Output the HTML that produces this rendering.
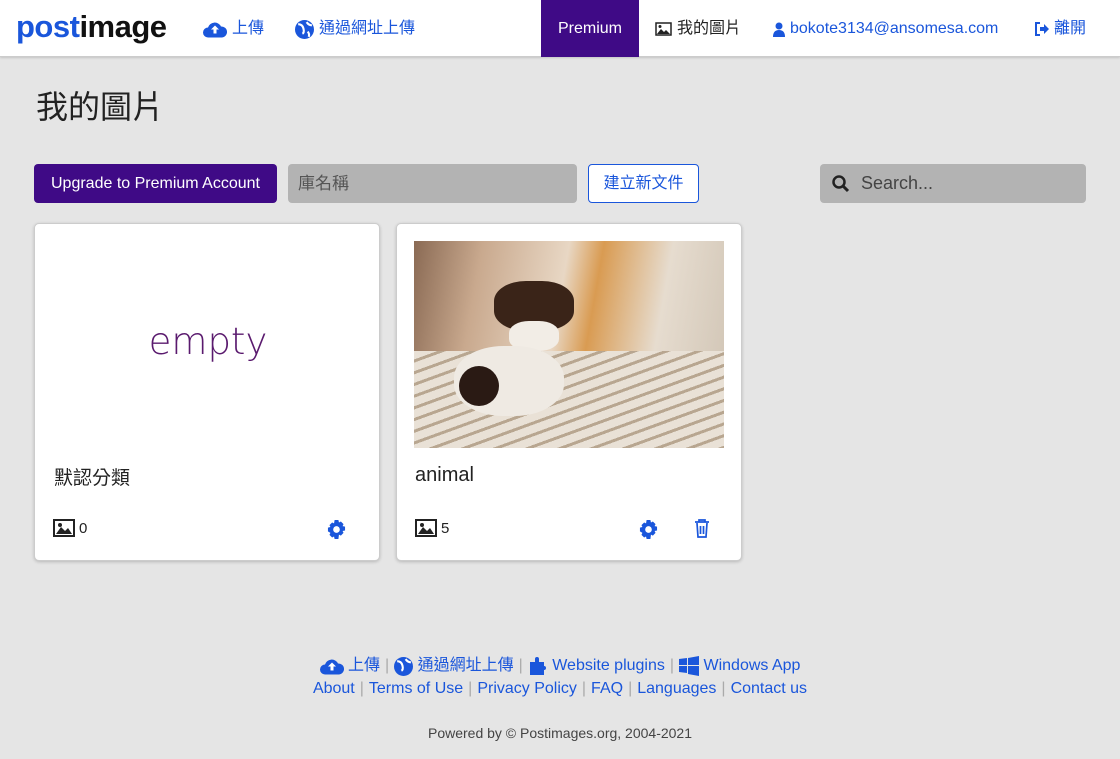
<!DOCTYPE html>
<html><head><meta charset="utf-8"><style>
*{box-sizing:border-box;margin:0;padding:0}
body{width:1120px;height:759px;background:#e5e5e5;font-family:"Liberation Sans","Noto Sans CJK TC",sans-serif;position:relative;overflow:hidden;color:#222}
.nav{position:absolute;left:0;top:0;width:1120px;height:57px;background:#fff;border-bottom:1px solid #ccc;box-shadow:0 1px 2px rgba(0,0,0,.15)}
.nav a{position:absolute;top:18px;height:22px;line-height:22px;font-size:16px;color:#1a56db;text-decoration:none;white-space:nowrap;display:flex;align-items:center;gap:5px}
.logo{position:absolute;left:16px;top:9px;font-size:31px;font-weight:bold;letter-spacing:-0.5px;font-family:"Liberation Sans",sans-serif}
.prem{position:absolute;left:541px;top:0;width:98px;height:57px;background:#3f0a86;color:#fff;font-size:16px;text-align:center;line-height:57px}
h1{position:absolute;left:36px;top:82px;font-size:32px;font-weight:normal;color:#222}
.btn1{position:absolute;left:34px;top:164px;width:243px;height:39px;background:#3f0a86;color:#fff;border-radius:4px;font-size:16px;line-height:39px;text-align:center}
.inp{position:absolute;left:288px;top:164px;width:289px;height:39px;background:#b3b3b3;border-radius:4px;font-size:17px;color:#555;line-height:39px;padding-left:10px}
.btn2{position:absolute;left:588px;top:164px;width:111px;height:39px;background:#fff;border:1px solid #1a56db;color:#1a56db;border-radius:4px;font-size:16px;line-height:37px;text-align:center}
.search{position:absolute;left:820px;top:164px;width:266px;height:39px;background:#b3b3b3;border-radius:4px;font-size:18px;color:#444;line-height:39px;padding-left:41px}
.card{position:absolute;top:223px;width:346px;height:338px;background:#fff;border:1px solid #ccc;border-radius:5px;box-shadow:0 1px 3px rgba(0,0,0,.2)}
.ic{position:absolute;display:flex;align-items:center;gap:4px;font-size:15px}
.foot{position:absolute;left:0;width:1120px;text-align:center;font-size:16px;line-height:22px;color:#1a56db;display:flex;justify-content:center;align-items:center}
.sep{color:#aaa;margin:0 5px}
</style></head><body>
<div class="nav">
<div class="logo"><span style="color:#1a56db">post</span><span style="color:#111">image</span></div>
<a style="left:203px"><svg width="24" height="17" viewBox="0 0 24 16"><path d="M5 16a5 5 0 0 1 0-10 7 7 0 0 1 13-1 5.5 5.5 0 0 1 1 11z" fill="#1a56db"/><path d="M12 4l-4 4h2.5v4h3V8H16z" fill="#fff"/></svg>上傳</a>
<a style="left:295px"><svg width="19" height="19" viewBox="0 0 18 18"><circle cx="9" cy="9" r="9" fill="#1a56db"/><path d="M3 4q4 0 5 4t-1 5M11 2q2 3 5 3M12 11q2 2 1 5" stroke="#fff" stroke-width="2" fill="none"/></svg>通過網址上傳</a>
<div class="prem">Premium</div>
<a style="left:655px;color:#222"><svg width="17" height="14" viewBox="0 0 17 14"><rect x="1" y="1" width="15" height="12" fill="none" stroke="#222" stroke-width="1.5"/><path d="M2 12l4-5 3 3 2-2 4 4z" fill="#222"/><circle cx="5" cy="4.5" r="1.5" fill="#222"/></svg>我的圖片</a>
<a style="left:773px"><svg width="12" height="15" viewBox="0 0 12 15"><circle cx="6" cy="4" r="3.5" fill="#1a56db"/><path d="M0 15q0-7 6-7t6 7z" fill="#1a56db"/></svg>bokote3134@ansomesa.com</a>
<a style="left:1034px"><svg width="15" height="14" viewBox="0 0 15 14"><path d="M6 1H2v12h4" stroke="#1a56db" stroke-width="2" fill="none"/><path d="M6 5h4V2l5 5-5 5V9H6z" fill="#1a56db"/></svg>離開</a>
</div>
<h1>我的圖片</h1>
<div class="btn1">Upgrade to Premium Account</div>
<div class="inp">庫名稱</div>
<div class="btn2">建立新文件</div>
<div class="search"><svg style="position:absolute;left:12px;top:11px" width="18" height="18" viewBox="0 0 18 18"><circle cx="7" cy="7" r="5.5" stroke="#222" stroke-width="2.5" fill="none"/><path d="M11 11l5 5" stroke="#222" stroke-width="3"/></svg>Search...</div>

<svg width="0" height="0" style="position:absolute"><defs><g id="gear"><path fill="#1a56db" fill-rule="evenodd" d="M8 0h4l.6 2.6 2-1 2.8 2.8-1 2 2.6.6v4l-2.6.6 1 2-2.8 2.8-2-1L12 20H8l-.6-2.6-2 1-2.8-2.8 1-2L1 12V8l2.6-.6-1-2 2.8-2.8 2 1zM10 6.5a3.5 3.5 0 1 0 0 7 3.5 3.5 0 0 0 0-7z"/></g></defs></svg>

<div class="card" style="left:34px">
<div style="position:absolute;left:0;width:346px;top:96px;text-align:center;font-size:37px;color:#5a1a6e;font-family:'DejaVu Sans',sans-serif;font-weight:300">empty</div>
<div style="position:absolute;left:19px;top:239px;font-size:19px">默認分類</div>
<div class="ic" style="left:18px;top:295px"><svg width="22" height="18" viewBox="0 0 22 18"><rect x="1" y="1" width="20" height="16" fill="none" stroke="#222" stroke-width="2"/><path d="M3 15l5-7 4 4 3-3 4 6z" fill="#222"/><circle cx="7" cy="6" r="2" fill="#222"/></svg>0</div>
<svg style="position:absolute;left:292px;top:296px" width="19" height="19" viewBox="0 0 20 20"><use href="#gear"/></svg>
</div>

<div class="card" style="left:396px">
<div style="position:absolute;left:17px;top:17px;width:310px;height:207px;background:linear-gradient(100deg,#8a6a54 0%,#c9a98e 20%,#e8d7c4 45%,#d99b52 55%,#e6dccf 75%,#cfc3b3 100%);overflow:hidden">
<div style="position:absolute;left:0;top:110px;width:310px;height:97px;background:repeating-linear-gradient(160deg,#e9e1d6 0 8px,#b8a690 8px 11px)"></div>
<div style="position:absolute;left:80px;top:40px;width:80px;height:50px;border-radius:40%;background:#3a2418"></div>
<div style="position:absolute;left:95px;top:80px;width:50px;height:30px;background:#f2ede6;border-radius:40%"></div>
<div style="position:absolute;left:40px;top:105px;width:110px;height:70px;background:#efeae3;border-radius:45%"></div>
<div style="position:absolute;left:45px;top:125px;width:40px;height:40px;background:#2a1a14;border-radius:50%"></div>
</div>
<div style="position:absolute;left:18px;top:240px;font-size:20px">animal</div>
<div class="ic" style="left:18px;top:295px"><svg width="22" height="18" viewBox="0 0 22 18"><rect x="1" y="1" width="20" height="16" fill="none" stroke="#222" stroke-width="2"/><path d="M3 15l5-7 4 4 3-3 4 6z" fill="#222"/><circle cx="7" cy="6" r="2" fill="#222"/></svg>5</div>
<svg style="position:absolute;left:242px;top:296px" width="19" height="19" viewBox="0 0 20 20"><use href="#gear"/></svg>
<svg style="position:absolute;left:297px;top:295px" width="16" height="19" viewBox="0 0 16 19"><path d="M1 3h14M5 3V1h6v2M3 4l1 14h8l1-14M6.5 7v8M9.5 7v8" stroke="#1a56db" stroke-width="1.7" fill="none"/></svg>
</div>

<div class="foot" style="top:655px"><svg width="24" height="17" viewBox="0 0 24 16"><path d="M5 16a5 5 0 0 1 0-10 7 7 0 0 1 13-1 5.5 5.5 0 0 1 1 11z" fill="#1a56db"/><path d="M12 4l-4 4h2.5v4h3V8H16z" fill="#fff"/></svg>&nbsp;上傳<span class="sep">|</span><svg width="19" height="19" viewBox="0 0 18 18"><circle cx="9" cy="9" r="9" fill="#1a56db"/><path d="M3 4q4 0 5 4t-1 5M11 2q2 3 5 3" stroke="#fff" stroke-width="2" fill="none"/></svg>&nbsp;通過網址上傳<span class="sep">|</span><svg width="20" height="20" viewBox="0 0 20 20"><path d="M2 6h5V3a2 2 0 0 1 4 0v3h5v4a2 2 0 0 1 0 4v5H2z" fill="#1a56db"/></svg>&nbsp;Website plugins<span class="sep">|</span><svg width="20" height="20" viewBox="0 0 20 20"><path d="M0 3l8-1v7H0zM9 2l11-2v9H9zM0 10h8v7l-8-1zM9 10h11v10l-11-2z" fill="#1a56db"/></svg>&nbsp;Windows App</div>
<div class="foot" style="top:678px">About<span class="sep">|</span>Terms of Use<span class="sep">|</span>Privacy Policy<span class="sep">|</span>FAQ<span class="sep">|</span>Languages<span class="sep">|</span>Contact us</div>
<div class="foot" style="top:722px;font-size:14px;color:#444">Powered by © Postimages.org, 2004-2021</div>
</body></html>
